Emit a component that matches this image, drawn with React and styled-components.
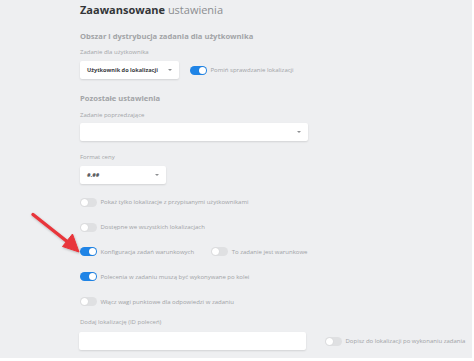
import React from "react";
import styled, { createGlobalStyle } from "styled-components";

const Global = createGlobalStyle`
  html, body { margin: 0; padding: 0; background: #ffffff; }
  body { font-family: "Open Sans", "Noto Sans", sans-serif; }
  * { box-sizing: border-box; }
`;

const Page = styled.div`
  position: relative;
  width: 472px;
  height: 358px;
  background: #eeeff1;
  overflow: hidden;
  padding: 2px 0 0 80px;
`;

const Title = styled.h1`
  margin: 0;
  font-size: 11px;
  line-height: 16.5px;
  font-weight: 700;
  color: #333538;
  span { font-weight: 400; color: #8b8d90; }
`;

const Heading = styled.h2`
  margin: ${(p) => p.$top}px 0 0 0;
  font-size: 7.6px;
  line-height: 11px;
  font-weight: 700;
  color: #a2a4a7;
`;

const Label = styled.div`
  margin: ${(p) => p.$top}px 0 0 0;
  font-size: 6px;
  line-height: 8px;
  color: #a3a5a8;
`;

const Row = styled.div`
  display: flex;
  align-items: center;
  margin-top: ${(p) => p.$top}px;
  margin-left: ${(p) => p.$left || 0}px;
  height: ${(p) => p.$h || 10}px;
`;

const Select = styled.div`
  position: relative;
  width: ${(p) => p.$w}px;
  height: 18px;
  background: #ffffff;
  border-radius: 2px;
  box-shadow: 0 1px 2px rgba(0, 0, 0, 0.12);
  display: flex;
  align-items: center;
  padding: 0 7px;
  font-size: 5.6px;
  font-weight: 700;
  color: #3a3c3f;
  flex-shrink: 0;
`;

const Caret = styled.span`
  margin-left: auto;
  width: 0;
  height: 0;
  border-left: 2px solid transparent;
  border-right: 2px solid transparent;
  border-top: 2.5px solid #8d8f92;
`;

const Input = styled.div`
  width: ${(p) => p.$w}px;
  height: 18px;
  background: #ffffff;
  border-radius: 2px;
  box-shadow: 0 1px 2px rgba(0, 0, 0, 0.12);
  flex-shrink: 0;
`;

const Switch = styled.span`
  position: relative;
  display: inline-block;
  width: 16.5px;
  height: 9px;
  border-radius: 5px;
  background: ${(p) => (p.$on ? "#1f84e6" : "#dfe0e2")};
  margin-left: ${(p) => p.$gap || 0}px;
  flex-shrink: 0;
  &::after {
    content: "";
    position: absolute;
    top: 1px;
    left: ${(p) => (p.$on ? "8.5px" : "1px")};
    width: 7px;
    height: 7px;
    border-radius: 50%;
    background: #ffffff;
    box-shadow: 0 0 1px rgba(0, 0, 0, 0.15);
  }
`;

const SwitchText = styled.span`
  margin-left: 4px;
  font-size: 6px;
  line-height: 8px;
  color: #a0a2a5;
  white-space: nowrap;
`;

const Arrow = styled.svg`
  position: absolute;
  left: 0;
  top: 0;
  pointer-events: none;
`;

function Toggle({ on, gap, children }) {
  return (
    <>
      <Switch $on={on} $gap={gap} />
      <SwitchText>{children}</SwitchText>
    </>
  );
}

export default function App() {
  return (
    <>
      <Global />
      <Page>
        <Title>
          Zaawansowane <span>ustawienia</span>
        </Title>
        <Heading $top={12.5}>Obszar i dystrybucja zadania dla użytkownika</Heading>
        <Label $top={6}>Zadanie dla użytkownika</Label>
        <Row $top={5} $h={18}>
          <Select $w={99}>
            Użytkownik do lokalizacji
            <Caret />
          </Select>
          <Toggle on gap={11}>Pomiń sprawdzanie lokalizacji</Toggle>
        </Row>
        <Heading $top={14}>Pozostałe ustawienia</Heading>
        <Label $top={6.5}>Zadanie poprzedzające</Label>
        <Row $top={4.5} $h={18}>
          <Select $w={228}>
            <Caret />
          </Select>
        </Row>
        <Label $top={12}>Format ceny</Label>
        <Row $top={5} $h={18}>
          <Select $w={86}>
            #.##
            <Caret />
          </Select>
        </Row>
        <Row $top={13}>
          <Toggle>Pokaż tylko lokalizacje z przypisanymi użytkownikami</Toggle>
        </Row>
        <Row $top={15}>
          <Toggle>Dostępne we wszystkich lokalizacjach</Toggle>
        </Row>
        <Row $top={14.5}>
          <Toggle on>Konfiguracja zadań warunkowych</Toggle>
          <Toggle gap={17}>To zadanie jest warunkowe</Toggle>
        </Row>
        <Row $top={15}>
          <Toggle on>Polecenia w zadaniu muszą być wykonywane po kolei</Toggle>
        </Row>
        <Row $top={15}>
          <Toggle>Włącz wagi punktowe dla odpowiedzi w zadaniu</Toggle>
        </Row>
        <Label $top={11}>Dodaj lokalizację (ID poleceń)</Label>
        <Row $top={6.5} $h={18} $left={-1}>
          <Input $w={227} />
          <Toggle gap={19}>Dopisz do lokalizacji po wykonaniu zadania</Toggle>
        </Row>
        <Arrow width="472" height="358" viewBox="0 0 472 358">
          <defs>
            <filter id="sh" x="-20%" y="-20%" width="140%" height="140%">
              <feDropShadow dx="0.5" dy="1" stdDeviation="0.8" floodColor="#000" floodOpacity="0.25" />
            </filter>
          </defs>
          <g filter="url(#sh)" fill="#e8353a" stroke="#e8353a">
            <line x1="33" y1="214.5" x2="69" y2="243" strokeWidth="3.4" strokeLinecap="round" />
            <polygon points="79,252 62.5,246.5 72.5,234" strokeWidth="1" strokeLinejoin="round" />
          </g>
        </Arrow>
      </Page>
    </>
  );
}
